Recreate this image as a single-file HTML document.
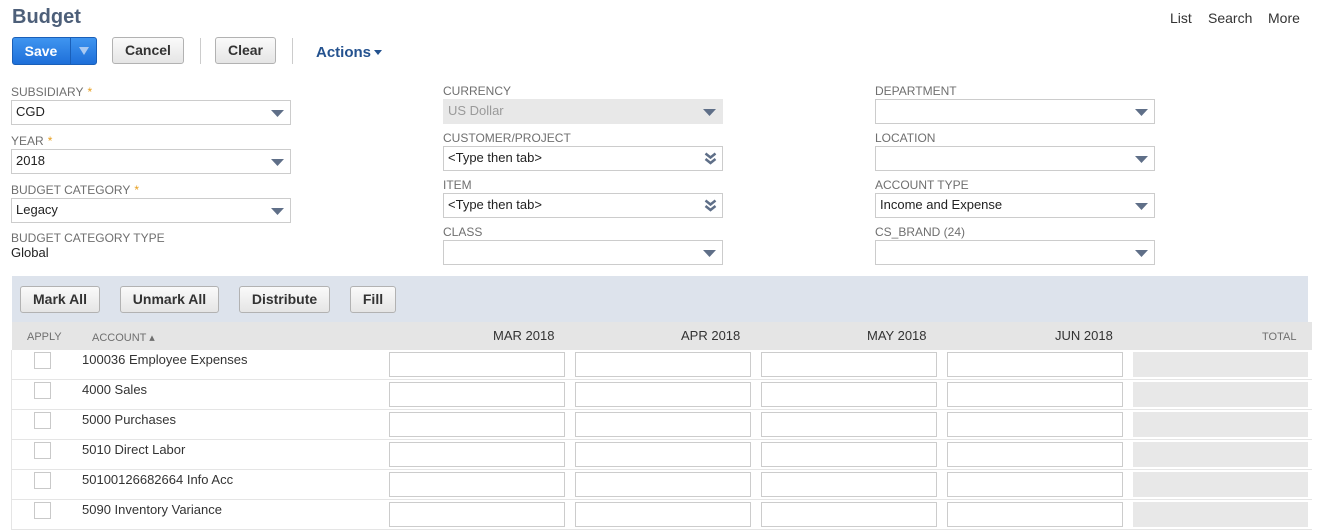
<!DOCTYPE html>
<html><head><meta charset="utf-8"><style>
*{box-sizing:border-box;margin:0;padding:0}
body{width:1318px;height:531px;position:relative;overflow:hidden;background:#fff;font-family:"Liberation Sans",Arial,sans-serif;color:#222}
.a{position:absolute}
.title{left:12px;top:6px;font-size:20px;font-weight:bold;color:#4d5f79}
.nav{top:10px;font-size:14px;color:#333}
.btn{position:absolute;height:27px;border:1px solid #b2b2b2;border-radius:3px;background:linear-gradient(#fafafa,#e5e5e5);font-size:14px;font-weight:bold;color:#333;text-align:center;line-height:25px}
.sep{position:absolute;width:1px;background:#ccc;top:38px;height:26px}
.lbl{position:absolute;font-size:12px;color:#6f6f6f;text-transform:uppercase}
.lbl b{color:#e79e1d;font-weight:normal;margin-left:4px}
.inp{position:absolute;width:280px;height:25px;border:1px solid #ccc;background:#fff;font-size:13px;line-height:22px;padding-left:4px;color:#222}
.inp.dis{background:#e8e8e8;border-color:#e8e8e8;color:#9a9a9a}
.arr{position:absolute;right:6px;top:9px}
.chev{position:absolute;right:5px;top:5px}
.panel{left:12px;top:276px;width:1296px;height:46px;background:#dde3ec}
.hdr{left:12px;top:322px;width:1300px;height:28px;background:#e5e5e5}
.h{position:absolute;font-size:13px;color:#333;top:328px}
.hs{position:absolute;font-size:11px;color:#6f6f6f;top:331px}
.row{position:absolute;left:11px;width:1301px;height:30px;border-bottom:1px solid #e5e5e5;border-left:1px solid #e5e5e5}
.cb{position:absolute;left:22px;top:2px;width:17px;height:17px;border:1px solid #c9c9c9;background:#fff}
.acc{position:absolute;left:70px;top:2px;font-size:13px;color:#333}
.ci{position:absolute;top:2px;width:176px;height:25px;border:1px solid #ccc;background:#fff}
.tot{position:absolute;top:2px;left:1121px;width:175px;height:25px;background:#e8e8e8}
</style></head><body>
<div class="a title">Budget</div>
<div class="a nav" style="left:1170px">List</div>
<div class="a nav" style="left:1208px">Search</div>
<div class="a nav" style="left:1268px">More</div>

<div class="a" style="left:12px;top:37px;width:85px;height:28px;background:linear-gradient(#3f95f0,#1e6fd9);border:1px solid #1a5fb8;border-radius:3px"></div>
<div class="a" style="left:12px;top:37px;width:58px;height:28px;color:#fff;font-weight:bold;font-size:14px;text-align:center;line-height:28px">Save</div>
<div class="a" style="left:70px;top:38px;width:1px;height:26px;background:#1a5fb8"></div>
<svg class="a" style="left:79px;top:47px" width="10" height="8"><path d="M0 0H10L5 8Z" fill="#a9c9f2"/></svg>
<div class="btn" style="left:112px;top:37px;width:72px">Cancel</div>
<div class="sep" style="left:200px"></div>
<div class="btn" style="left:215px;top:37px;width:61px">Clear</div>
<div class="sep" style="left:292px"></div>
<div class="a" style="left:316px;top:44px;font-size:15px;font-weight:bold;color:#24528f">Actions</div>
<svg class="a" style="left:374px;top:50px" width="8" height="5"><path d="M0 0H8L4 5Z" fill="#24528f"/></svg>

<div class="lbl" style="left:11px;top:85px">Subsidiary<b>*</b></div>
<div class="inp" style="left:11px;top:100px">CGD<svg class="arr" width="13" height="7"><path d="M0 0H13L6.5 7Z" fill="#5f6f88"/></svg></div>
<div class="lbl" style="left:11px;top:134px">Year<b>*</b></div>
<div class="inp" style="left:11px;top:149px">2018<svg class="arr" width="13" height="7"><path d="M0 0H13L6.5 7Z" fill="#5f6f88"/></svg></div>
<div class="lbl" style="left:11px;top:183px">Budget Category<b>*</b></div>
<div class="inp" style="left:11px;top:198px">Legacy<svg class="arr" width="13" height="7"><path d="M0 0H13L6.5 7Z" fill="#5f6f88"/></svg></div>
<div class="lbl" style="left:11px;top:231px">Budget Category Type</div>
<div class="a" style="left:11px;top:245px;font-size:13px;color:#222">Global</div>

<div class="lbl" style="left:443px;top:84px">Currency</div>
<div class="inp dis" style="left:443px;top:99px">US Dollar<svg class="arr" width="13" height="7"><path d="M0 0H13L6.5 7Z" fill="#5f6f88"/></svg></div>
<div class="lbl" style="left:443px;top:131px">Customer/Project</div>
<div class="inp" style="left:443px;top:146px">&lt;Type then tab&gt;<svg class="chev" width="13" height="13"><path d="M1.5 1.5L6.5 5.5L11.5 1.5M1.5 7L6.5 11L11.5 7" fill="none" stroke="#5f6f88" stroke-width="2.5"/></svg></div>
<div class="lbl" style="left:443px;top:178px">Item</div>
<div class="inp" style="left:443px;top:193px">&lt;Type then tab&gt;<svg class="chev" width="13" height="13"><path d="M1.5 1.5L6.5 5.5L11.5 1.5M1.5 7L6.5 11L11.5 7" fill="none" stroke="#5f6f88" stroke-width="2.5"/></svg></div>
<div class="lbl" style="left:443px;top:225px">Class</div>
<div class="inp" style="left:443px;top:240px"><svg class="arr" width="13" height="7"><path d="M0 0H13L6.5 7Z" fill="#5f6f88"/></svg></div>

<div class="lbl" style="left:875px;top:84px">Department</div>
<div class="inp" style="left:875px;top:99px"><svg class="arr" width="13" height="7"><path d="M0 0H13L6.5 7Z" fill="#5f6f88"/></svg></div>
<div class="lbl" style="left:875px;top:131px">Location</div>
<div class="inp" style="left:875px;top:146px"><svg class="arr" width="13" height="7"><path d="M0 0H13L6.5 7Z" fill="#5f6f88"/></svg></div>
<div class="lbl" style="left:875px;top:178px">Account Type</div>
<div class="inp" style="left:875px;top:193px">Income and Expense<svg class="arr" width="13" height="7"><path d="M0 0H13L6.5 7Z" fill="#5f6f88"/></svg></div>
<div class="lbl" style="left:875px;top:225px;text-transform:none">CS_BRAND (24)</div>
<div class="inp" style="left:875px;top:240px"><svg class="arr" width="13" height="7"><path d="M0 0H13L6.5 7Z" fill="#5f6f88"/></svg></div>

<div class="a panel"></div>
<div class="btn" style="left:20px;top:286px;width:80px">Mark All</div>
<div class="btn" style="left:120px;top:286px;width:99px">Unmark All</div>
<div class="btn" style="left:239px;top:286px;width:91px">Distribute</div>
<div class="btn" style="left:350px;top:286px;width:46px">Fill</div>

<div class="a hdr"></div>
<div class="hs" style="left:27px">APPLY</div>
<div class="hs" style="left:92px">ACCOUNT ▴</div>
<div class="h" style="left:493px">MAR 2018</div>
<div class="h" style="left:681px">APR 2018</div>
<div class="h" style="left:867px">MAY 2018</div>
<div class="h" style="left:1055px">JUN 2018</div>
<div class="hs" style="left:1262px">TOTAL</div>

<div class="row" style="top:350px"><div class="cb"></div><div class="acc">100036 Employee Expenses</div><div class="ci" style="left:377px"></div><div class="ci" style="left:563px"></div><div class="ci" style="left:749px"></div><div class="ci" style="left:935px"></div><div class="tot"></div></div>
<div class="row" style="top:380px"><div class="cb"></div><div class="acc">4000 Sales</div><div class="ci" style="left:377px"></div><div class="ci" style="left:563px"></div><div class="ci" style="left:749px"></div><div class="ci" style="left:935px"></div><div class="tot"></div></div>
<div class="row" style="top:410px"><div class="cb"></div><div class="acc">5000 Purchases</div><div class="ci" style="left:377px"></div><div class="ci" style="left:563px"></div><div class="ci" style="left:749px"></div><div class="ci" style="left:935px"></div><div class="tot"></div></div>
<div class="row" style="top:440px"><div class="cb"></div><div class="acc">5010 Direct Labor</div><div class="ci" style="left:377px"></div><div class="ci" style="left:563px"></div><div class="ci" style="left:749px"></div><div class="ci" style="left:935px"></div><div class="tot"></div></div>
<div class="row" style="top:470px"><div class="cb"></div><div class="acc">50100126682664 Info Acc</div><div class="ci" style="left:377px"></div><div class="ci" style="left:563px"></div><div class="ci" style="left:749px"></div><div class="ci" style="left:935px"></div><div class="tot"></div></div>
<div class="row" style="top:500px"><div class="cb"></div><div class="acc">5090 Inventory Variance</div><div class="ci" style="left:377px"></div><div class="ci" style="left:563px"></div><div class="ci" style="left:749px"></div><div class="ci" style="left:935px"></div><div class="tot"></div></div>
</body></html>
